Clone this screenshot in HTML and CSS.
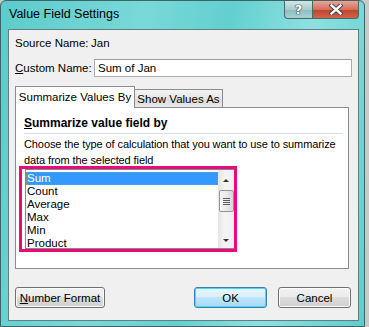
FILE: index.html
```html
<!DOCTYPE html>
<html lang="en">

<head>
  <meta charset="UTF-8">
  <meta name="viewport" content="width=device-width, initial-scale=1.0">
  <title>Value Field Settings</title>
  <link rel="stylesheet" href="styles.css">
</head>

<body>
  <div class="window">
    <div class="titlebar">
      <span class="title">Value Field Settings</span>
      <div class="caption-btns">
        <span class="cap help">?</span>
        <span class="cap close">
          <svg width="14" height="11" viewBox="0 0 14 11">
            <path d="M2.5 1.5 L11.5 9.5 M11.5 1.5 L2.5 9.5" stroke="#3a3a3a" stroke-width="4.2" stroke-linecap="square" />
            <path d="M2.5 1.5 L11.5 9.5 M11.5 1.5 L2.5 9.5" stroke="#fff" stroke-width="2.4" stroke-linecap="square" />
          </svg>
        </span>
      </div>
    </div>

    <div class="client">
      <div class="row source">
        <span class="label">Source Name:</span>
        <span class="value">Jan</span>
      </div>
      <div class="row custom">
        <span class="label"><u>C</u>ustom Name:</span>
        <div class="textbox">Sum of Jan</div>
      </div>

      <div class="tabs">
        <div class="tab active">Summarize Values By</div>
        <div class="tab">Show Values As</div>
      </div>

      <section class="panel">
        <div class="heading"><u>S</u>ummarize value field by</div>
        <p class="desc">Choose the type of calculation that you want to use to summarize<br>data from the selected field</p>
        <div class="highlight">
          <div class="listbox">
            <ul class="items">
              <li class="selected">Sum</li>
              <li>Count</li>
              <li>Average</li>
              <li>Max</li>
              <li>Min</li>
              <li>Product</li>
            </ul>
            <div class="scrollbar">
              <span class="arrow up"></span>
              <span class="thumb"><i></i><i></i><i></i><i></i></span>
              <span class="arrow down"></span>
            </div>
          </div>
        </div>
      </section>

      <div class="footer">
        <button class="btn wide"><u>N</u>umber Format</button>
        <span class="spacer"></span>
        <button class="btn ok">OK</button>
        <button class="btn">Cancel</button>
      </div>
    </div>
  </div>
</body>

</html>
```

FILE: styles.css
```css
html {
  box-sizing: border-box;
  font-family: 'Liberation Sans', Arial, sans-serif;
  font-size: 11.5px;
}

*,
*::after,
*::before {
  box-sizing: inherit;
}

body {
  margin: 0;
  background-color: #c9c9c9;
  color: #000;
}

u {
  text-decoration-thickness: 1px;
  text-underline-offset: 1px;
}

.window {
  width: 365px;
  height: 327px;
  border: 1px solid #3f6464;
  border-radius: 6px 6px 0 0;
  background: linear-gradient(100deg, #5ccccc 0%, #7ad8d8 35%, #63cfcf 55%, #8ee0e0 75%, #60cdcd 100%);
  display: flex;
  flex-direction: column;
}

.titlebar {
  height: 28px;
  display: flex;
  align-items: flex-start;
}

.title {
  margin: 6px 0 0 8px;
  line-height: 15px;
  font-size: 12.5px;
  color: #000;
}

.caption-btns {
  margin-left: auto;
  margin-right: 5px;
  display: flex;
}

.cap {
  height: 18px;
  display: flex;
  align-items: center;
  justify-content: center;
  border: 1px solid #456a6a;
  border-top: none;
}

.help {
  width: 28px;
  border-radius: 0 0 0 4px;
  border-right: none;
  background: linear-gradient(#cfe6e6, #a9cccc 50%, #8dbcbc 51%, #a6d2d2);
  color: #fff;
  font-family: 'DejaVu Sans', sans-serif;
  font-weight: bold;
  font-size: 13px;
  text-shadow: 0 0 1px #333, 0 0 1px #333, 0 0 1px #333;
}

.close {
  width: 47px;
  border-radius: 0 0 4px 0;
  background: linear-gradient(#e8a595, #d3705d 50%, #c2422c 51%, #d2634b);
}

.client {
  flex: 1;
  margin: 0 5px 5px 7px;
  border: 1px solid #5f7f80;
  background-color: #f0f0f0;
  padding: 6px 7px 0 6px;
  display: flex;
  flex-direction: column;
}

.row {
  display: flex;
  align-items: center;
  white-space: nowrap;
}

.label {
  flex-shrink: 0;
}

.source {
  line-height: 15px;
}

.source .label {
  width: 76px;
}

.custom {
  margin-top: 8px;
  height: 18px;
}

.custom .label {
  width: 79px;
}

.textbox {
  flex-shrink: 0;
  width: 258px;
  height: 18px;
  border: 1px solid #abadb3;
  border-top-color: #9a9ea6;
  background-color: #fff;
  padding: 0 3px;
  line-height: 16px;
}

.tabs {
  margin-top: 9px;
  height: 21px;
  display: flex;
  align-items: flex-end;
  white-space: nowrap;
}

.tab {
  flex-shrink: 0;
  height: 18px;
  width: 89px;
  margin-left: -1px;
  border: 1px solid #898c95;
  border-bottom: none;
  background: linear-gradient(#f3f3f3, #e6e6e6 50%, #dadada 51%, #e9e9e9);
  text-align: center;
  line-height: 18px;
}

.tab.active {
  position: relative;
  z-index: 1;
  margin-left: 0;
  margin-bottom: -1px;
  width: 120px;
  height: 22px;
  background: #fff;
  line-height: 21px;
}

.panel {
  width: 334px;
  height: 162px;
  border: 1px solid #898c95;
  background-color: #fff;
  padding: 8px 5px 0 8px;
}

.heading {
  font-weight: bold;
  font-size: 12px;
  line-height: 15px;
  padding-bottom: 2px;
  border-bottom: 1px solid #d5dfe5;
}

.desc {
  margin: 2px 0 0;
  font-size: 11px;
  letter-spacing: -0.1px;
  line-height: 16px;
  white-space: nowrap;
}

.highlight {
  margin: -2px 0 0 -5px;
  width: 218px;
  height: 86px;
  border: 3px solid #ec0a7b;
  padding-left: 3px;
}

.listbox {
  height: 100%;
  border: 1px solid #82878f;
  border-right: none;
  display: flex;
}

.items {
  flex: 1;
  list-style: none;
  margin: 0;
  padding: 2px 0 0;
}

.items li {
  height: 13px;
  line-height: 13px;
  padding-left: 1px;
}

.items li.selected {
  background-color: #3399ff;
  color: #fff;
  outline: 1px dotted #c88a2a;
  outline-offset: -1px;
}

.scrollbar {
  width: 16px;
  background: linear-gradient(90deg, #e4e4e4, #f4f4f4 40%, #f0f0f0);
  display: flex;
  flex-direction: column;
  align-items: center;
}

.arrow {
  width: 0;
  height: 0;
  border-left: 3px solid transparent;
  border-right: 3px solid transparent;
}

.arrow.up {
  margin-top: 9px;
  border-bottom: 3px solid #333;
}

.arrow.down {
  margin-top: auto;
  margin-bottom: 6px;
  border-top: 3px solid #333;
}

.thumb {
  margin-top: 8px;
  width: 15px;
  height: 22px;
  border: 1px solid #959595;
  border-radius: 2px;
  background: linear-gradient(90deg, #f6f6f6, #e9e9e9 50%, #d6d6d6);
  display: flex;
  flex-direction: column;
  justify-content: center;
  align-items: center;
  gap: 1px;
}

.thumb i {
  width: 7px;
  height: 1px;
  border-bottom: 1px solid #5f5f5f;
}

.footer {
  margin-top: 18px;
  display: flex;
  gap: 11px;
}

.spacer {
  flex: 1;
}

.btn {
  flex-shrink: 0;
  height: 21px;
  width: 73px;
  padding: 0;
  font-family: inherit;
  font-size: 11.5px;
  color: #000;
  border: 1px solid #707070;
  border-radius: 3px;
  background: linear-gradient(#f2f2f2, #ebebeb 45%, #dddddd 50%, #cfcfcf);
  box-shadow: inset 0 0 0 1px #fcfcfc;
}

.btn.wide {
  width: 90px;
}

.btn.ok {
  border-color: #3c7fb1;
  box-shadow: inset 0 0 0 1px #48d8fb;
  background: linear-gradient(#eaf6fd, #d9f0fc 45%, #bee6fd 50%, #a7d9f5);
}
```
